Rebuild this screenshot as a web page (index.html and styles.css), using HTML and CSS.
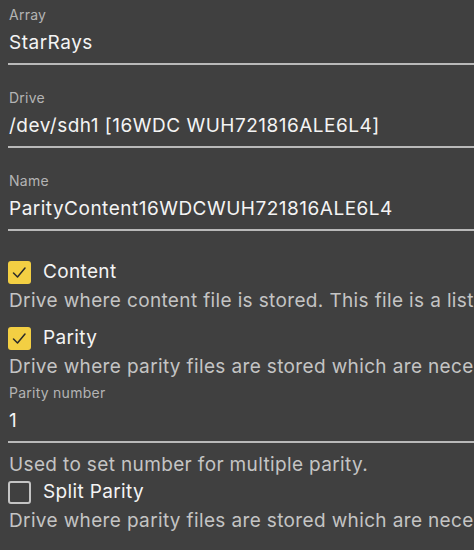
FILE: index.html
```html
<!DOCTYPE html>
<html>
<head>
<meta charset="utf-8">
<link rel="stylesheet" href="styles.css">
</head>
<body>
<div class="form">
  <div class="field">
    <div class="label">Array</div>
    <div class="value">StarRays</div>
  </div>
  <div class="field">
    <div class="label">Drive</div>
    <div class="value">/dev/sdh1 [16WDC WUH721816ALE6L4]</div>
  </div>
  <div class="field field-last">
    <div class="label">Name</div>
    <div class="value">ParityContent16WDCWUH721816ALE6L4</div>
  </div>

  <div class="check-group">
    <div class="check-row">
      <span class="box checked"><svg viewBox="0 0 23 23" width="23" height="23"><path d="M5.5 12 L9.5 16 L17 7" fill="none" stroke="#2a2a2a" stroke-width="1.5" stroke-linecap="round" stroke-linejoin="round"/></svg></span>
      <span class="check-text">Content</span>
    </div>
    <div class="desc">Drive where content file is stored. This file is a list of all the files on the array</div>
  </div>

  <div class="check-group check-group-last">
    <div class="check-row">
      <span class="box checked"><svg viewBox="0 0 23 23" width="23" height="23"><path d="M5.5 12 L9.5 16 L17 7" fill="none" stroke="#2a2a2a" stroke-width="1.5" stroke-linecap="round" stroke-linejoin="round"/></svg></span>
      <span class="check-text">Parity</span>
    </div>
    <div class="desc">Drive where parity files are stored which are necessary for recovery</div>
  </div>

  <div class="field field-number">
    <div class="label">Parity number</div>
    <div class="value">1</div>
  </div>
  <div class="desc desc-plain">Used to set number for multiple parity.</div>

  <div class="check-group">
    <div class="check-row">
      <span class="box"></span>
      <span class="check-text">Split Parity</span>
    </div>
    <div class="desc">Drive where parity files are stored which are necessary for recovery</div>
  </div>
</div>
</body>
</html>
```

FILE: styles.css
```css
html, body {
  margin: 0;
  padding: 0;
  background: #404040;
  height: 100%;
  overflow: hidden;
}
body {
  font-family: Inter, "Noto Sans", "Liberation Sans", sans-serif;
  color: #f2f2f2;
}
.form {
  padding: 7px 0 0 8px;
  display: flex;
  flex-direction: column;
}
.field {
  margin-bottom: 25px;
}
.field-last {
  margin-bottom: 29px;
}
.label {
  font-size: 14px;
  line-height: 16px;
  letter-spacing: 0.25px;
  color: #b4b4b4;
  padding-left: 1px;
}
.value {
  font-size: 19px;
  line-height: 40px;
  height: 40px;
  letter-spacing: 0.5px;
  color: #f4f4f4;
  border-bottom: 2px solid #b9b9b9;
  white-space: nowrap;
  padding-left: 1px;
}
.check-group {
  margin-bottom: 11px;
}
.check-group-last {
  margin-bottom: 4px;
}
.check-row {
  display: flex;
  align-items: center;
  height: 24px;
  gap: 12px;
}
.box {
  width: 23px;
  height: 23px;
  box-sizing: border-box;
  border: 2px solid #c4c4c4;
  border-radius: 3px;
  display: flex;
  align-items: center;
  justify-content: center;
  flex: none;
}
.box.checked {
  background: #f3cf43;
  border: none;
}
.check-text {
  font-size: 19px;
  line-height: 24px;
  letter-spacing: 0.35px;
  color: #f4f4f4;
}
.desc {
  margin-top: 3px;
  font-size: 19px;
  line-height: 28px;
  letter-spacing: 0.36px;
  color: #c4c4c4;
  white-space: nowrap;
  overflow: hidden;
  padding-left: 1px;
}
.field-number {
  margin-bottom: 0;
}
.desc-plain {
  margin-top: 8px;
  margin-bottom: 1px;
}
```
